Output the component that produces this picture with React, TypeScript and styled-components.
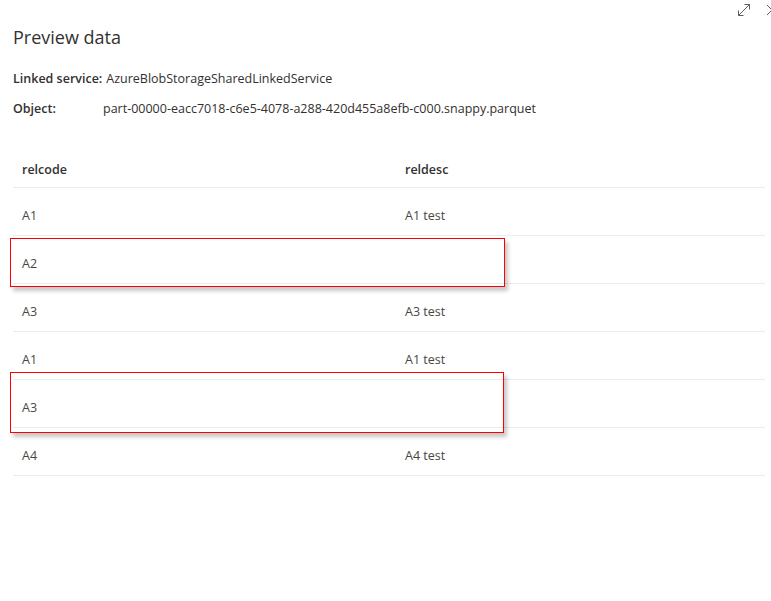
import React from "react";
import styled, { createGlobalStyle } from "styled-components";

const Global = createGlobalStyle`
  html, body { margin: 0; padding: 0; background: #ffffff; }
  body {
    font-family: "Segoe UI", "Open Sans", "Noto Sans", sans-serif;
    color: #323130;
    -webkit-font-smoothing: antialiased;
  }
`;

const Panel = styled.div`
  width: 771px;
  height: 601px;
  box-sizing: border-box;
  padding: 0 6px 0 13px;
  overflow: hidden;
  display: flex;
  flex-direction: column;
`;

const TopBar = styled.div`
  height: 20px;
  display: flex;
  justify-content: flex-end;
  align-items: center;
  gap: 12px;
  margin-right: -15px;
`;

const IconButton = styled.span`
  width: 16px;
  height: 16px;
  display: inline-flex;
  align-items: center;
  justify-content: center;
  color: #605e5c;
`;

const Title = styled.h1`
  margin: 5px 0 0 0;
  font-size: 18px;
  line-height: 24px;
  font-weight: 400;
  color: #323130;
`;

const Meta = styled.div`
  margin-top: 20px;
  display: flex;
  flex-direction: column;
  gap: 10px;
`;

const MetaRow = styled.div`
  display: flex;
  align-items: baseline;
  font-size: 12.5px;
  line-height: 20px;
  white-space: nowrap;
`;

const MetaLabel = styled.span<{ $width?: number }>`
  font-weight: 600;
  color: #323130;
  ${(p) => (p.$width ? `width: ${p.$width}px;` : "margin-right: 4px;")}
`;

const MetaValue = styled.span`
  color: #323130;
`;

const TableWrap = styled.div`
  position: relative;
  margin-top: 33px;
`;

const Grid = styled.div`
  display: grid;
  grid-template-columns: 383px 1fr;
`;

const HeadCell = styled.div`
  height: 36px;
  box-sizing: border-box;
  padding: 0 9px;
  display: flex;
  align-items: center;
  font-size: 12.5px;
  font-weight: 600;
  color: #323130;
  border-bottom: 1px solid #edebe9;
`;

const Cell = styled.div`
  height: 48px;
  box-sizing: border-box;
  padding: 7px 9px 0;
  display: flex;
  align-items: center;
  font-size: 12.5px;
  color: #484644;
  border-bottom: 1px solid #edebe9;
`;

const Highlight = styled.div<{ $top: number; $height: number; $width: number }>`
  position: absolute;
  left: -3px;
  top: ${(p) => p.$top}px;
  width: ${(p) => p.$width}px;
  height: ${(p) => p.$height}px;
  box-sizing: border-box;
  border: 1.5px solid #ff0000;
  box-shadow: 3px 4px 4px rgba(0, 0, 0, 0.22);
  pointer-events: none;
`;

const ExpandIcon = () => (
  <svg width="16" height="16" viewBox="0 0 16 16" fill="none" stroke="currentColor" strokeWidth="1">
    <path d="M2.5 13.5 L13.5 2.5" />
    <path d="M2.5 8.5 V13.5 H7.5" />
    <path d="M8.5 2.5 H13.5 V7.5" />
  </svg>
);

const CloseIcon = () => (
  <svg width="16" height="16" viewBox="0 0 16 16" fill="none" stroke="currentColor" strokeWidth="1">
    <path d="M3 3 L13 13" />
    <path d="M13 3 L3 13" />
  </svg>
);

const rows: [string, string][] = [
  ["A1", "A1 test"],
  ["A2", ""],
  ["A3", "A3 test"],
  ["A1", "A1 test"],
  ["A3", ""],
  ["A4", "A4 test"],
];

export default function App() {
  return (
    <>
      <Global />
      <Panel>
        <TopBar>
          <IconButton>
            <ExpandIcon />
          </IconButton>
          <IconButton>
            <CloseIcon />
          </IconButton>
        </TopBar>
        <Title>Preview data</Title>
        <Meta>
          <MetaRow>
            <MetaLabel>Linked service:</MetaLabel>
            <MetaValue>AzureBlobStorageSharedLinkedService</MetaValue>
          </MetaRow>
          <MetaRow>
            <MetaLabel $width={90}>Object:</MetaLabel>
            <MetaValue>part-00000-eacc7018-c6e5-4078-a288-420d455a8efb-c000.snappy.parquet</MetaValue>
          </MetaRow>
        </Meta>
        <TableWrap>
          <Grid>
            <HeadCell>relcode</HeadCell>
            <HeadCell>reldesc</HeadCell>
            {rows.map(([a, b], i) => (
              <React.Fragment key={i}>
                <Cell>{a}</Cell>
                <Cell>{b}</Cell>
              </React.Fragment>
            ))}
          </Grid>
          <Highlight $top={86} $height={49} $width={495} />
          <Highlight $top={220} $height={61} $width={494} />
        </TableWrap>
      </Panel>
    </>
  );
}
